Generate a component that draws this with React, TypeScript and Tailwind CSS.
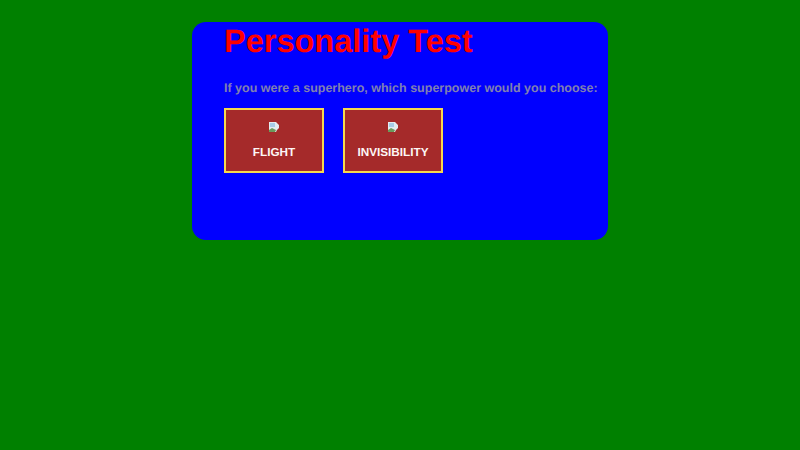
function Choice({ label }: { label: string }) {
  return (
    <button className="flex h-[65px] w-[100px] flex-col items-center border-2 border-[#f5d94e] bg-[#a52a2a] pt-[12px] text-[#fdf6f6]">
      <svg width="11" height="11" viewBox="0 0 11 11" aria-hidden>
        <path d="M0 0h7l3 3v3l-2 2-1 2H0z" fill="#e4ecf0" />
        <path d="M0 8l3-2 2 1 2 1-1 2H0z" fill="#6b9a5c" />
        <path d="M1 1h5v4H1z" fill="#a8cce8" />
      </svg>
      <span className="mt-[11px] text-[11.75px] leading-[16px] font-bold">{label}</span>
    </button>
  );
}

export default function App() {
  return (
    <div className="h-[450px] w-[800px] bg-[#008000] pt-[22px] font-['Liberation_Sans',sans-serif] [text-rendering:geometricPrecision]">
      <div className="mx-auto h-[218px] w-[416px] rounded-[14px] bg-[#0000ff] pl-[32px]">
        <h1 className="text-[32.5px] leading-[38px] font-bold text-[#ff0000]">Personality Test</h1>
        <p className="mt-[20px] text-[12.5px] leading-[16px] font-bold whitespace-nowrap text-[#8080b0]">
          If you were a superhero, which superpower would you choose:
        </p>
        <div className="mt-[12px] flex gap-[19px]">
          <Choice label="FLIGHT" />
          <Choice label="INVISIBILITY" />
        </div>
      </div>
    </div>
  );
}
